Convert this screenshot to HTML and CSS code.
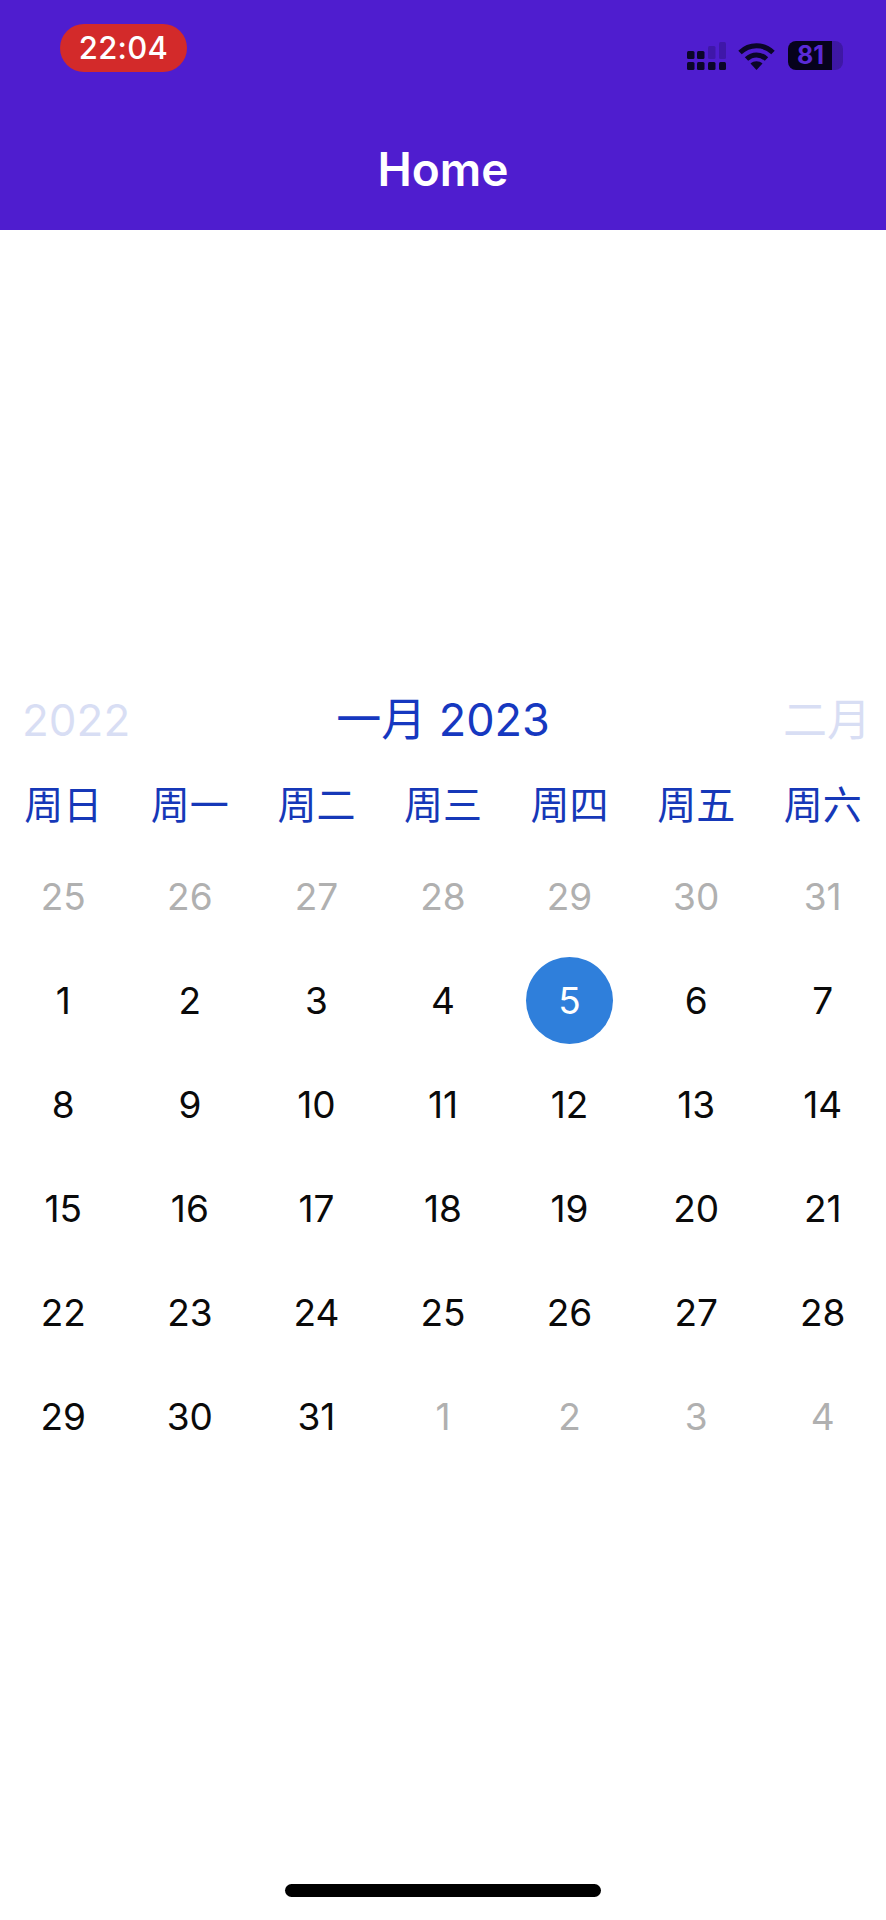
FILE: index.html
```html
<!DOCTYPE html>
<html lang="zh">
<head>
<meta charset="utf-8">
<title>Home</title>
<link rel="stylesheet" href="styles.css">
</head>
<body>
<div class="app">
  <header class="header">
    <div class="status">
      <div class="clock">22:04</div>
      <div class="status-icons">
        <svg class="signal" width="39" height="30" viewBox="0 0 39 30">
          <g fill="#0b0628">
            <rect x="0" y="10" width="7.500" height="8" rx="1.500"/>
            <rect x="10" y="10" width="7.500" height="8" rx="1.500"/>
            <rect x="0" y="21" width="7.500" height="8" rx="1.500"/>
            <rect x="10" y="21" width="7.500" height="8" rx="1.500"/>
            <rect x="21" y="21" width="7.500" height="8" rx="1.500"/>
            <rect x="32" y="21" width="7" height="8" rx="1.500"/>
          </g>
          <g fill="#0b0628" opacity=".22">
            <rect x="21" y="5" width="7.500" height="13" rx="1.500"/>
            <rect x="32" y="1" width="7" height="17" rx="1.500"/>
          </g>
        </svg>
        <svg class="wifi" width="37" height="28" viewBox="0 0 37 28">
          <g fill="none" stroke="#0b0628" stroke-width="5">
            <path d="M2 10.500C11.500 1.500 25.500 1.500 35 10.500"/>
            <path d="M8.500 17C14.500 11.500 22.500 11.500 28.500 17"/>
          </g>
          <path d="M12.500 21.500C16 18.500 21 18.500 24.500 21.500L18.500 28Z" fill="#0b0628"/>
        </svg>
        <div class="battery">81</div>
      </div>
    </div>
    <h1 class="title">Home</h1>
  </header>

  <main class="main">
    <div class="month-nav">
      <span class="side prev">2022</span>
      <span class="current">一月 2023</span>
      <span class="side next">二月</span>
    </div>
    <div class="grid weekdays">
      <span>周日</span><span>周一</span><span>周二</span><span>周三</span><span>周四</span><span>周五</span><span>周六</span>
    </div>
    <div class="grid days">
      <span class="day muted">25</span><span class="day muted">26</span><span class="day muted">27</span><span class="day muted">28</span><span class="day muted">29</span><span class="day muted">30</span><span class="day muted">31</span>
      <span class="day">1</span><span class="day">2</span><span class="day">3</span><span class="day">4</span><span class="day"><span class="selected">5</span></span><span class="day">6</span><span class="day">7</span>
      <span class="day">8</span><span class="day">9</span><span class="day">10</span><span class="day">11</span><span class="day">12</span><span class="day">13</span><span class="day">14</span>
      <span class="day">15</span><span class="day">16</span><span class="day">17</span><span class="day">18</span><span class="day">19</span><span class="day">20</span><span class="day">21</span>
      <span class="day">22</span><span class="day">23</span><span class="day">24</span><span class="day">25</span><span class="day">26</span><span class="day">27</span><span class="day">28</span>
      <span class="day">29</span><span class="day">30</span><span class="day">31</span><span class="day muted">1</span><span class="day muted">2</span><span class="day muted">3</span><span class="day muted">4</span>
    </div>
  </main>

  <footer class="home-bar"><div class="indicator"></div></footer>
</div>
</body>
</html>
```

FILE: styles.css
```css
* { box-sizing: border-box; }
html, body { margin: 0; padding: 0; background: #fff; }
body { font-family: Inter, "Noto Sans CJK SC", sans-serif; }
.app { width: 886px; height: 1920px; display: flex; flex-direction: column; overflow: hidden; }

.header { height: 230px; background: #4f1dcf; padding-top: 24px; flex: none; }
.status { display: flex; justify-content: space-between; align-items: flex-start; padding: 0 43px 0 60px; height: 48px; }
.clock { width: 127px; height: 48px; border-radius: 24px; background: #d32a2a; color: #fff; font-size: 31px; font-weight: 450; line-height: 48px; text-align: center; letter-spacing: .3px; }
.status-icons { display: flex; align-items: center; height: 48px; margin-top: 7px; }
.signal { margin-right: 12px; margin-top: 2px; }
.wifi { margin-right: 13px; margin-top: 1px; }
.battery { width: 55px; height: 29px; border-radius: 8px; background: linear-gradient(90deg, #06021c 0 80%, rgba(11,6,40,.25) 80% 100%); color: #5a2ad8; font-size: 25px; font-weight: 700; line-height: 29px; padding-left: 9px; }

.title { margin: 68px 0 0; color: #fff; font-size: 46px; font-weight: 600; line-height: 58px; text-align: center; }

.main { flex: 1; padding-top: 460px; }
.month-nav { display: grid; grid-template-columns: 1fr auto 1fr; align-items: center; height: 60px; padding: 0 22px; font-size: 45px; line-height: 60px; color: #1638c0; }
.side { opacity: .16; font-size: 44px; }
.next { text-align: right; margin-right: -7px; }

.grid { display: grid; grid-template-columns: repeat(7, 1fr); text-align: center; }
.weekdays { height: 58px; margin-top: 25px; line-height: 60px; font-size: 39px; color: #1638b8; }
.days { margin-top: 11px; grid-auto-rows: 104px; font-size: 37px; color: #0a0a0a; }
.day { display: flex; align-items: center; justify-content: center; }
.muted { color: #b0b0b0; }
.selected { width: 87px; height: 87px; border-radius: 50%; background: #2f7fdb; color: #fff; display: flex; align-items: center; justify-content: center; }

.home-bar { flex: none; height: 36px; display: flex; justify-content: center; }
.indicator { width: 316px; height: 13px; border-radius: 7px; background: #000; }
```
